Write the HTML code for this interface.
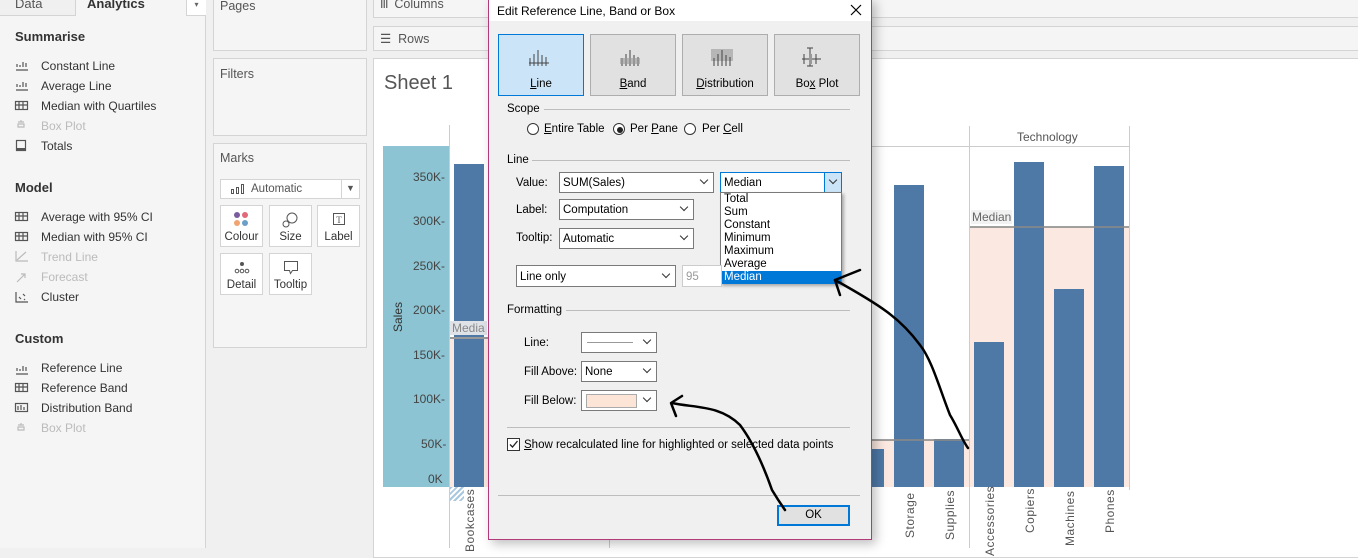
<!DOCTYPE html>
<html><head><meta charset="utf-8"><style>
*{margin:0;padding:0;box-sizing:border-box}
body{width:1358px;height:548px;overflow:hidden;position:relative;font-family:"Liberation Sans",sans-serif;font-size:12px;color:#333;background:#f0f0f0}
.a{position:absolute}
.t{position:absolute;white-space:nowrap}
.lp{left:0;top:0;width:206px;height:548px;background:#f5f5f5;border-right:1px solid #d4d4d4}
.h{font-weight:bold;font-size:13px;color:#333}
.it{font-size:12px;color:#333}
.dis{color:#bbb}
.box{position:absolute;background:#f5f5f5;border:1px solid #d4d4d4}
.mb{position:absolute;background:#fff;border:1px solid #d4d4d4;width:43px;height:42px;text-align:center;font-size:11.5px}
.bar{position:absolute;background:#4e79a7}
.dlg{font-family:"Liberation Sans",sans-serif;font-size:11.5px;color:#000}
.sel{position:absolute;background:#fff;border:1px solid #7a7a7a;height:21px;padding:4px 3px 2px;font-size:11.5px}
.chev{position:absolute;right:6px;top:4px;width:6px;height:6px;border-right:1px solid #333;border-bottom:1px solid #333;transform:rotate(45deg)}
.tb{position:absolute;top:34px;width:86px;height:62px;background:#e1e1e1;border:1px solid #adadad;text-align:center;font-size:11.5px}
.tb span{position:absolute;left:0;right:0;top:43px}
.rad{position:absolute;width:12px;height:12px;border:1px solid #333;border-radius:50%;background:#fff}
.sep{position:absolute;height:1px;background:#bdbdbd}
.rl{position:absolute;white-space:nowrap;transform:rotate(-90deg);transform-origin:left top;font-size:12px;letter-spacing:.5px;color:#555}
</style></head><body>
<div class="a lp"></div>
<div class="a" style="left:0;top:0;width:76px;height:16px;background:#f0f0f0;border-right:1px solid #d4d4d4;border-bottom:1px solid #d4d4d4"></div>
<div class="t" style="left:15px;top:-4px;font-size:13px;color:#555">Data</div>
<div class="t" style="left:87px;top:-4px;font-size:13px;font-weight:bold">Analytics</div>
<div class="a" style="left:186px;top:0;width:20px;height:16px;border-left:1px solid #d4d4d4;border-bottom:1px solid #d4d4d4;background:#fff;font-size:8px;text-align:center;color:#666">▾</div>
<div class="t h" style="left:15px;top:29px">Summarise</div>
<div class="t it" style="left:41px;top:59px">Constant Line</div>
<div class="t it" style="left:41px;top:79px">Average Line</div>
<div class="t it" style="left:41px;top:99px">Median with Quartiles</div>
<div class="t it dis" style="left:41px;top:119px">Box Plot</div>
<div class="t it" style="left:41px;top:139px">Totals</div>
<div class="t h" style="left:15px;top:180px">Model</div>
<div class="t it" style="left:41px;top:210px">Average with 95% CI</div>
<div class="t it" style="left:41px;top:230px">Median with 95% CI</div>
<div class="t it dis" style="left:41px;top:250px">Trend Line</div>
<div class="t it dis" style="left:41px;top:270px">Forecast</div>
<div class="t it" style="left:41px;top:290px">Cluster</div>
<div class="t h" style="left:15px;top:331px">Custom</div>
<div class="t it" style="left:41px;top:361px">Reference Line</div>
<div class="t it" style="left:41px;top:381px">Reference Band</div>
<div class="t it" style="left:41px;top:401px">Distribution Band</div>
<div class="t it dis" style="left:41px;top:421px">Box Plot</div>
<svg class="a" style="left:14px;top:56px" width="16" height="380" fill="none" stroke="#555" stroke-width="1.2">
<path d="M2 14h12M3 11v-3M6 11v-2M9 11v-5M12 11v-4"/>
<path d="M2 34h12M3 31v-3M6 31v-2M9 31v-5M12 31v-4"/>
<rect x="1.5" y="45.5" width="12" height="8"/><path d="M2 49h12M5 46v7M9 46v7"/>
<path stroke="#bbb" d="M4 66h6M7 64v2M4 68h6v3H4z"/>
<rect x="2.5" y="84.5" width="9" height="10"/><path d="M3 93h8" stroke-width="2"/>
<rect x="1.5" y="156.5" width="12" height="8"/><path d="M2 160h12M5 157v7M9 157v7"/>
<rect x="1.5" y="176.5" width="12" height="8"/><path d="M2 180h12M5 177v7M9 177v7"/>
<path stroke="#bbb" d="M2 195v10h12M3 204l9-8"/>
<path stroke="#bbb" d="M3 226l8-8M7 218h4v4"/>
<path d="M2 236v10h12M5 241l2 2M9 238l2 2M10 243l1 1"/>
<path d="M2 318h12M3 315v-3M6 315v-2M9 315v-5M12 315v-4"/>
<rect x="1.5" y="327.5" width="12" height="8"/><path d="M2 331h12M5 328v7M9 328v7"/>
<rect x="1.5" y="347.5" width="12" height="8"/><path d="M4 350v4M7 349v5M10 351v3"/>
<path stroke="#bbb" d="M4 369h6M7 367v2M4 371h6v3H4z"/>
</svg>
<div class="box" style="left:213px;top:-2px;width:154px;height:53px"></div>
<div class="t" style="left:220px;top:-1px;color:#555;font-size:12.5px">Pages</div>
<div class="box" style="left:213px;top:58px;width:154px;height:78px"></div>
<div class="t" style="left:220px;top:67px;color:#555;font-size:12.5px">Filters</div>
<div class="box" style="left:213px;top:143px;width:154px;height:205px"></div>
<div class="t" style="left:220px;top:151px;color:#555;font-size:12.5px">Marks</div>
<div class="a" style="left:220px;top:179px;width:140px;height:20px;background:#fff;border:1px solid #d4d4d4"></div>
<div class="a" style="left:341px;top:179px;width:1px;height:20px;background:#d4d4d4"></div>
<div class="t" style="left:251px;top:183px;font-size:11.5px;color:#555">Automatic</div>
<div class="t" style="left:346px;top:183px;font-size:9px;color:#555">▼</div>
<svg class="a" style="left:230px;top:183px" width="16" height="12" fill="none" stroke="#555"><rect x="1.5" y="6.5" width="2" height="4"/><rect x="6.5" y="4.5" width="2" height="6"/><rect x="11.5" y="1.5" width="2" height="9"/></svg>
<div class="mb" style="left:220px;top:205px"><svg width="20" height="18" style="margin-top:5px"><circle cx="5" cy="4" r="3" fill="#7b5c9e"/><circle cx="13" cy="4" r="3" fill="#e06a7a"/><circle cx="5" cy="12" r="3" fill="#f1a471"/><circle cx="13" cy="12" r="3" fill="#6b9ec8"/></svg><div style="margin-top:-1px">Colour</div></div>
<div class="mb" style="left:269px;top:205px"><svg width="20" height="18" style="margin-top:5px" fill="none" stroke="#555"><circle cx="11" cy="7" r="5"/><circle cx="5" cy="13" r="3"/></svg><div style="margin-top:-1px">Size</div></div>
<div class="mb" style="left:317px;top:205px"><svg width="20" height="18" style="margin-top:5px" fill="none" stroke="#555"><rect x="4.5" y="2.5" width="11" height="11"/><text x="10" y="12" font-size="9" text-anchor="middle" fill="#555" stroke="none" font-family="Liberation Serif">T</text></svg><div style="margin-top:-1px">Label</div></div>
<div class="mb" style="left:220px;top:253px"><svg width="20" height="18" style="margin-top:5px" fill="none" stroke="#555"><circle cx="10" cy="5" r="1.5" fill="#555"/><circle cx="5" cy="12" r="1.8"/><circle cx="10" cy="12" r="1.8"/><circle cx="15" cy="12" r="1.8"/></svg><div style="margin-top:-1px">Detail</div></div>
<div class="mb" style="left:269px;top:253px"><svg width="20" height="18" style="margin-top:5px" fill="none" stroke="#555"><path d="M3.5 2.5h13v9h-5l-2 3-1-3h-5z"/></svg><div style="margin-top:-1px">Tooltip</div></div>
<div class="box" style="left:373px;top:-2px;width:990px;height:20px"></div>
<div class="t" style="left:380px;top:-3px;color:#555;font-size:12.5px"><b style="font-weight:normal;letter-spacing:-1px">III</b>&nbsp; Columns</div>
<div class="box" style="left:373px;top:26px;width:990px;height:25px"></div>
<div class="t" style="left:380px;top:31px;color:#555;font-size:12.5px">☰&nbsp; Rows</div>
<div class="a" style="left:373px;top:58px;width:990px;height:500px;background:#fff;border:1px solid #d4d4d4"></div>
<div class="t" style="left:384px;top:72px;font-size:20px;color:#555">Sheet 1</div>
<div class="a" style="left:383px;top:146px;width:67px;height:341px;background:#8cc4d3"></div>
<div class="a" style="left:449px;top:125px;width:1px;height:423px;background:#ccc"></div>
<div class="a" style="left:609px;top:487px;width:1px;height:61px;background:#ccc"></div>
<div class="t" style="left:391px;top:332px;transform:rotate(-90deg);transform-origin:left top;font-size:12px;color:#333">Sales</div>
<div class="t" style="left:413px;top:170px;font-size:12px;color:#444">350K-</div>
<div class="t" style="left:413px;top:214px;font-size:12px;color:#444">300K-</div>
<div class="t" style="left:413px;top:259px;font-size:12px;color:#444">250K-</div>
<div class="t" style="left:413px;top:303px;font-size:12px;color:#444">200K-</div>
<div class="t" style="left:413px;top:348px;font-size:12px;color:#444">150K-</div>
<div class="t" style="left:413px;top:392px;font-size:12px;color:#444">100K-</div>
<div class="t" style="left:421px;top:437px;font-size:12px;color:#444">50K-</div>
<div class="t" style="left:428px;top:472px;font-size:12px;color:#444">0K</div>
<div class="a" style="left:450px;top:338px;width:38px;height:149px;background:#fbe8e0"></div>
<div class="bar" style="left:454px;top:164px;width:30px;height:323px"></div>
<div class="a" style="left:450px;top:337px;width:38px;height:2px;background:#999"></div>
<div class="t" style="left:450px;top:321px;background:#dfe3e8;color:#888;font-size:12px;padding:0 2px">Media</div>
<div class="a" style="left:450px;top:487px;width:14px;height:14px;background:repeating-linear-gradient(135deg,#a8c8e0 0 2px,#fff 2px 4px)"></div>
<div class="rl" style="left:463px;top:552px">Bookcases</div>
<div class="a" style="left:969px;top:126px;width:1px;height:422px;background:#ccc"></div>
<div class="a" style="left:1129px;top:126px;width:1px;height:364px;background:#ccc"></div>
<div class="a" style="left:872px;top:146px;width:258px;height:1px;background:#ccc"></div>
<div class="t" style="left:1017px;top:130px;font-size:12px;color:#555">Technology</div>
<div class="a" style="left:872px;top:440px;width:97px;height:47px;background:#fbe8e0"></div>
<div class="a" style="left:970px;top:227px;width:159px;height:260px;background:#fbe8e0"></div>
<div class="bar" style="left:860px;top:449px;width:24px;height:38px"></div>
<div class="bar" style="left:894px;top:185px;width:30px;height:302px"></div>
<div class="bar" style="left:934px;top:439px;width:30px;height:48px"></div>
<div class="bar" style="left:974px;top:342px;width:30px;height:145px"></div>
<div class="bar" style="left:1014px;top:162px;width:30px;height:325px"></div>
<div class="bar" style="left:1054px;top:289px;width:30px;height:198px"></div>
<div class="bar" style="left:1094px;top:166px;width:30px;height:321px"></div>
<div class="a" style="left:860px;top:439px;width:109px;height:2px;background:#8a8a8a;opacity:.8"></div>
<div class="a" style="left:970px;top:226px;width:159px;height:2px;background:#8a8a8a;opacity:.8"></div>
<div class="t" style="left:971px;top:210px;background:#f2f2f2;color:#666;font-size:12px;padding:0 1px">Median</div>
<div class="rl" style="left:903px;top:538px">Storage</div>
<div class="rl" style="left:943px;top:540px">Supplies</div>
<div class="rl" style="left:983px;top:556px">Accessories</div>
<div class="rl" style="left:1023px;top:533px">Copiers</div>
<div class="rl" style="left:1063px;top:546px">Machines</div>
<div class="rl" style="left:1103px;top:533px">Phones</div>
<div class="a dlg" style="left:488px;top:-2px;width:384px;height:542px;background:#f0f0f0;border:1px solid #b23a78;box-shadow:4px 4px 10px rgba(0,0,0,.25)">
<div class="a" style="left:0;top:0;width:382px;height:22px;background:#fff"></div>
<div class="t" style="left:8px;top:5px;font-size:12px">Edit Reference Line, Band or Box</div>
<svg class="a" style="left:361px;top:5px" width="12" height="12" stroke="#000" stroke-width="1.2"><path d="M1 1l10 10M11 1L1 11"/></svg>
</div>
<div class="dlg">
<div class="tb" style="left:498px;background:#cce4f7;border-color:#0078d7"><span><u>L</u>ine</span></div>
<div class="tb" style="left:590px"><span><u>B</u>and</span></div>
<div class="tb" style="left:682px"><span><u>D</u>istribution</span></div>
<div class="tb" style="left:774px"><span>Bo<u>x</u> Plot</span></div>
<svg class="a" style="left:527px;top:44px" width="300" height="26" fill="none" stroke="#444">
<path d="M3 22v-8M7 22v-12M11 22v-16M15 22v-11M19 22v-9M2 19h20" />
<path d="M95 22v-8M99 22v-12M103 22v-16M107 22v-11M111 22v-9"/><rect x="93" y="14" width="20" height="6" fill="#999" stroke="none" opacity=".6"/>
<rect x="184" y="5" width="22" height="12" fill="#999" stroke="none" opacity=".6"/><path d="M187 22v-8M191 22v-12M195 22v-16M199 22v-11M203 22v-9"/>
<path d="M283 22v-18M280 4h6M280 22h6M277 10v10M289 10v10M275 15h19"/><rect x="282" y="10" width="3" height="10" fill="#999" stroke="none"/>
</svg>
<div class="t" style="left:507px;top:103px">Scope</div><div class="sep" style="left:544px;top:109px;width:306px"></div>
<div class="rad" style="left:527px;top:123px"></div><div class="t" style="left:544px;top:123px"><u>E</u>ntire Table</div>
<div class="rad" style="left:613px;top:123px"></div><div class="a" style="left:617px;top:127px;width:6px;height:6px;border-radius:50%;background:#222"></div><div class="t" style="left:630px;top:123px">Per <u>P</u>ane</div>
<div class="rad" style="left:684px;top:123px"></div><div class="t" style="left:702px;top:123px">Per <u>C</u>ell</div>
<div class="t" style="left:507px;top:154px">Line</div><div class="sep" style="left:532px;top:160px;width:318px"></div>
<div class="t" style="left:516px;top:177px">Value:</div>
<div class="sel" style="left:559px;top:172px;width:155px">SUM(Sales)<i class="chev"></i></div>
<div class="sel" style="left:720px;top:172px;width:122px;border-color:#0078d7">Median<div class="a" style="right:0;top:0;width:17px;height:19px;background:#cce4f7;border-left:1px solid #0078d7"><i class="chev" style="right:5px;top:4px"></i></div></div>
<div class="a" style="left:720px;top:192px;width:122px;height:92px;background:#fff;border:1px solid #7a7a7a;box-shadow:2px 2px 3px rgba(0,0,0,.3);line-height:13px;font-size:11.5px">
<div style="padding-left:3px">Total</div><div style="padding-left:3px">Sum</div><div style="padding-left:3px">Constant</div><div style="padding-left:3px">Minimum</div><div style="padding-left:3px">Maximum</div><div style="padding-left:3px">Average</div><div style="padding-left:3px;background:#0078d7;color:#fff">Median</div></div>
<div class="t" style="left:516px;top:204px">Label:</div>
<div class="sel" style="left:559px;top:199px;width:135px">Computation<i class="chev"></i></div>
<div class="t" style="left:516px;top:232px">Tooltip:</div>
<div class="sel" style="left:559px;top:228px;width:135px">Automatic<i class="chev"></i></div>
<div class="sel" style="left:516px;top:265px;width:160px;height:22px;padding-top:5px">Line only<i class="chev" style="top:5px"></i></div>
<div class="sel" style="left:682px;top:265px;width:40px;height:22px;border-color:#ccc;color:#999;padding-top:5px">95</div>
<div class="t" style="left:507px;top:304px">Formatting</div><div class="sep" style="left:566px;top:310px;width:284px"></div>
<div class="t" style="left:524px;top:337px">Line:</div>
<div class="sel" style="left:581px;top:332px;width:76px"><div class="a" style="left:5px;top:9px;width:46px;height:1px;background:#999"></div><i class="chev"></i></div>
<div class="t" style="left:524px;top:366px">Fill Above:</div>
<div class="sel" style="left:581px;top:361px;width:76px">None<i class="chev"></i></div>
<div class="t" style="left:524px;top:395px">Fill Below:</div>
<div class="sel" style="left:581px;top:390px;width:76px"><div class="a" style="left:4px;top:3px;width:51px;height:14px;background:#fce4d6;border:1px solid #aaa"></div><i class="chev"></i></div>
<div class="sep" style="left:507px;top:427px;width:343px"></div>
<div class="a" style="left:507px;top:438px;width:13px;height:13px;border:1px solid #333;background:#fff"></div>
<svg class="a" style="left:508px;top:439px" width="11" height="11" fill="none" stroke="#222" stroke-width="1.3"><path d="M2 5.5l2.5 2.5 5-6"/></svg>
<div class="t" style="left:524px;top:439px"><u>S</u>how recalculated line for highlighted or selected data points</div>
<div class="sep" style="left:498px;top:495px;width:362px"></div>
<div class="a" style="left:777px;top:505px;width:73px;height:21px;background:#e1e1e1;border:2px solid #0078d7;text-align:center;line-height:17px">OK</div>
</div>
<svg class="a" style="left:0;top:0" width="1358" height="548" fill="none" stroke="#000" stroke-width="2.5" stroke-linecap="round" stroke-linejoin="round">
<path d="M785 510 C778 500 775 495 772 490 C765 470 755 445 740 425 C720 405 695 408 672 403"/>
<path d="M682 396 L671 403 L676 416"/>
<path d="M968 448 C962 440 958 428 950 415 C940 390 932 360 920 345 C900 318 880 305 835 280"/>
<path d="M835 280 L860 270 M835 280 L840 295"/>
</svg>
</body></html>
